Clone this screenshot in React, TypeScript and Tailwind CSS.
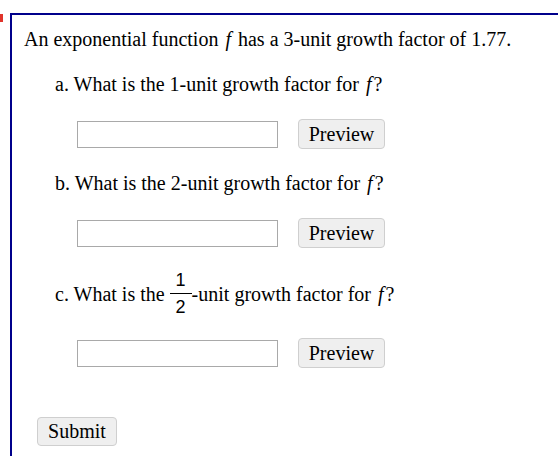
import React from 'react';

const serif = { fontFamily: '"Liberation Serif", "Times New Roman", serif' };

function F() {
  return <i className="px-[2px]">f</i>;
}

function AnswerRow() {
  return (
    <div className="ml-[53px] flex items-center gap-[20px] h-[30px]">
      <input
        type="text"
        className="w-[201px] h-[27px] border border-[#a9a9a9] bg-white outline-none"
      />
      <button className="h-[30px] w-[87px] rounded-[4px] border border-[#cfcfcf] bg-[#efefef] text-[20px] leading-[23px] text-black">
        Preview
      </button>
    </div>
  );
}

export default function App() {
  return (
    <div className="relative w-full h-[456px] overflow-hidden bg-white text-black" style={serif}>
      <div className="absolute left-0 top-[14px] w-[3px] h-[8px] bg-[#e0332b]" />
      <div className="ml-[10px] mt-[13px] h-[500px] border-t-2 border-l-2 border-[#00008b] pl-[12px] pt-[13px] text-[20px] leading-[23px]">
        <p>
          An exponential function <F /> has a 3-unit growth factor of 1.77.
        </p>

        <p className="ml-[31px] mt-[22px]">
          a. What is the 1-unit growth factor for <F />?
        </p>
        <div className="mt-[23px]">
          <AnswerRow />
        </div>

        <p className="ml-[31px] mt-[23px]">
          b. What is the 2-unit growth factor for <F />?
        </p>
        <div className="mt-[23px]">
          <AnswerRow />
        </div>

        <div className="ml-[31px] mt-[22px] flex items-center h-[48px]">
          <span>c. What is the&nbsp;</span>
          <span
            className="inline-flex flex-col items-center text-[18px] leading-[20px] mt-[-1px]"
            style={{ fontFamily: '"Liberation Sans", Arial, sans-serif' }}
          >
            <span className="pb-[3px]">1</span>
            <span className="w-[22px] h-px bg-black" />
            <span className="pt-[3px]">2</span>
          </span>
          <span>-unit growth factor for <F />?</span>
        </div>
        <div className="mt-[20px]">
          <AnswerRow />
        </div>

        <button className="ml-[13px] mt-[49px] h-[29px] w-[80px] rounded-[4px] border border-[#cfcfcf] bg-[#efefef] text-[20px] leading-[23px] text-black">
          Submit
        </button>
      </div>
    </div>
  );
}
